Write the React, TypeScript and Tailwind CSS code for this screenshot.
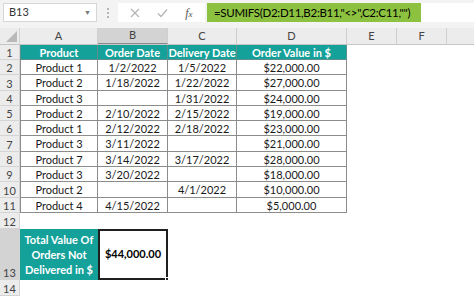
import React from 'react';

const rows: string[][] = [
  ['Product 1', '1/2/2022', '1/5/2022', '$22,000.00'],
  ['Product 2', '1/18/2022', '1/22/2022', '$27,000.00'],
  ['Product 3', '', '1/31/2022', '$24,000.00'],
  ['Product 2', '2/10/2022', '2/15/2022', '$19,000.00'],
  ['Product 1', '2/12/2022', '2/18/2022', '$23,000.00'],
  ['Product 3', '3/11/2022', '', '$21,000.00'],
  ['Product 7', '3/14/2022', '3/17/2022', '$28,000.00'],
  ['Product 3', '3/20/2022', '', '$18,000.00'],
  ['Product 2', '', '4/1/2022', '$10,000.00'],
  ['Product 4', '4/15/2022', '', '$5,000.00'],
];

// row heights for rows 1-11 (sums to 168px, rows are ~15.3px in the shot)
const heights = ['h-[15px]', 'h-[15px]', 'h-[16px]', 'h-[15px]', 'h-[15px]', 'h-[15px]', 'h-[16px]', 'h-[15px]', 'h-[15px]', 'h-[16px]', 'h-[15px]'];

const colWidths = ['w-[78px]', 'w-[70px]', 'w-[69px]', 'w-[110px]'];

const RowNum: React.FC<{ n: number; active?: boolean; className?: string }> = ({ n, active, className = '' }) => (
  <div
    className={`w-[20px] shrink-0 flex items-end justify-center pb-[1px] text-[11px] leading-none text-[#444] border-b border-r border-[#d4d4d4] ${
      active ? 'bg-[#d3d3d3]' : 'bg-[#ececec]'
    } ${className}`}
  >
    {n}
  </div>
);

const App: React.FC = () => {
  return (
    <div className="w-[474px] h-[296px] overflow-hidden bg-white font-['Lato',sans-serif] text-[#1a1a1a]">
      {/* Formula toolbar */}
      <div className="h-[28px] bg-[#f3f3f3] flex items-start pt-[3px] pl-[3px]">
        <div className="w-[94px] h-[19px] bg-white border border-[#d6d6d6] flex items-center justify-between px-[5px]">
          <span className="text-[11px] text-[#333]">B13</span>
          <span className="text-[7px] text-[#777]">▼</span>
        </div>
        <div className="w-[21px] h-[19px] flex flex-col items-center justify-center gap-[2px]">
          <span className="w-[2px] h-[2px] bg-[#b5b5b5]" />
          <span className="w-[2px] h-[2px] bg-[#b5b5b5]" />
          <span className="w-[2px] h-[2px] bg-[#b5b5b5]" />
        </div>
        <div className="w-[87px] h-[19px] bg-white flex items-center justify-around px-[4px]">
          <svg width="10" height="10" viewBox="0 0 10 10">
            <path d="M1 1 L9 9 M9 1 L1 9" stroke="#b4b4b4" strokeWidth="1.2" />
          </svg>
          <svg width="11" height="10" viewBox="0 0 11 10">
            <path d="M1 5.5 L4 8.5 L10 1.5" stroke="#b4b4b4" strokeWidth="1.2" fill="none" />
          </svg>
          <span className="font-['Liberation_Serif',serif] italic text-[12px] text-[#555]">
            f<span className="text-[9px]">x</span>
          </span>
        </div>
        <div className="w-[2px]" />
        <div className="w-[214px] h-[19px] bg-[#8dc240] flex items-center pl-[7px] text-[11.5px] tracking-[-0.3px] text-black whitespace-nowrap">
          =SUMIFS(D2:D11,B2:B11,"&lt;&gt;",C2:C11,"")
        </div>
        <div className="flex-1 h-[19px] bg-white" />
      </div>

      {/* Column headers */}
      <div className="flex h-[17px] bg-[#ececec] border-b border-[#c6c6c6] text-[11px] text-[#444]">
        <div className="w-[20px] shrink-0 flex items-end justify-end p-[2px] border-r border-[#d4d4d4]">
          <svg width="11" height="11" viewBox="0 0 11 11">
            <path d="M11 0 L11 11 L0 11 Z" fill="#b9b9b9" />
          </svg>
        </div>
        {['A', 'B', 'C', 'D', 'E', 'F'].map((c, i) => (
          <div
            key={c}
            className={`${['w-[78px]', 'w-[70px]', 'w-[69px]', 'w-[110px]', 'w-[50px]', 'w-[50px]'][i]} shrink-0 flex items-center justify-center border-r border-[#cfcfcf] ${
              c === 'B' ? 'bg-[#d3d3d3] border-b border-b-[#8a8a8a]' : ''
            }`}
          >
            {c}
          </div>
        ))}
        <div className="flex-1" />
      </div>

      {/* Row 1: headers */}
      <div className={`flex ${heights[0]}`}>
        <RowNum n={1} />
        {['Product', 'Order Date', 'Delivery Date', 'Order Value in $'].map((h, i) => (
          <div
            key={h}
            className={`${colWidths[i]} shrink-0 bg-[#14a19a] text-white font-bold text-[11px] leading-none flex items-center justify-center whitespace-nowrap border-r border-b border-[#5f8f8c] ${
              i === 0 ? 'border-l' : ''
            }`}
          >
            {h}
          </div>
        ))}
      </div>

      {/* Data rows 2-11 */}
      {rows.map((r, ri) => (
        <div key={ri} className={`flex ${heights[ri + 1]}`}>
          <RowNum n={ri + 2} />
          {r.map((v, i) => (
            <div
              key={i}
              className={`${colWidths[i]} shrink-0 text-[11px] leading-none flex items-center justify-center whitespace-nowrap border-r border-b border-[#8c8c8c] ${
                i === 0 ? 'border-l' : ''
              }`}
            >
              {v}
            </div>
          ))}
        </div>
      ))}

      {/* Row 12 */}
      <div className="flex h-[16px]">
        <RowNum n={12} />
      </div>

      {/* Row 13: summary */}
      <div className="flex h-[51px]">
        <RowNum n={13} active />
        <div className="w-[78px] shrink-0 bg-[#14a19a] text-white font-bold text-[11px] leading-[15px] flex items-center justify-center text-center">
          Total Value Of
          <br />
          Orders Not
          <br />
          Delivered in $
        </div>
        <div className="relative w-[70px] shrink-0 border-2 border-[#1f1f1f] flex items-center justify-center font-bold text-[11px] text-black">
          $44,000.00
          <span className="absolute -right-[3px] -bottom-[3px] w-[4px] h-[4px] bg-[#1f1f1f] border border-white" />
        </div>
      </div>

      {/* Row 14 */}
      <div className="flex h-[16px]">
        <RowNum n={14} />
      </div>
    </div>
  );
};

export default App;
